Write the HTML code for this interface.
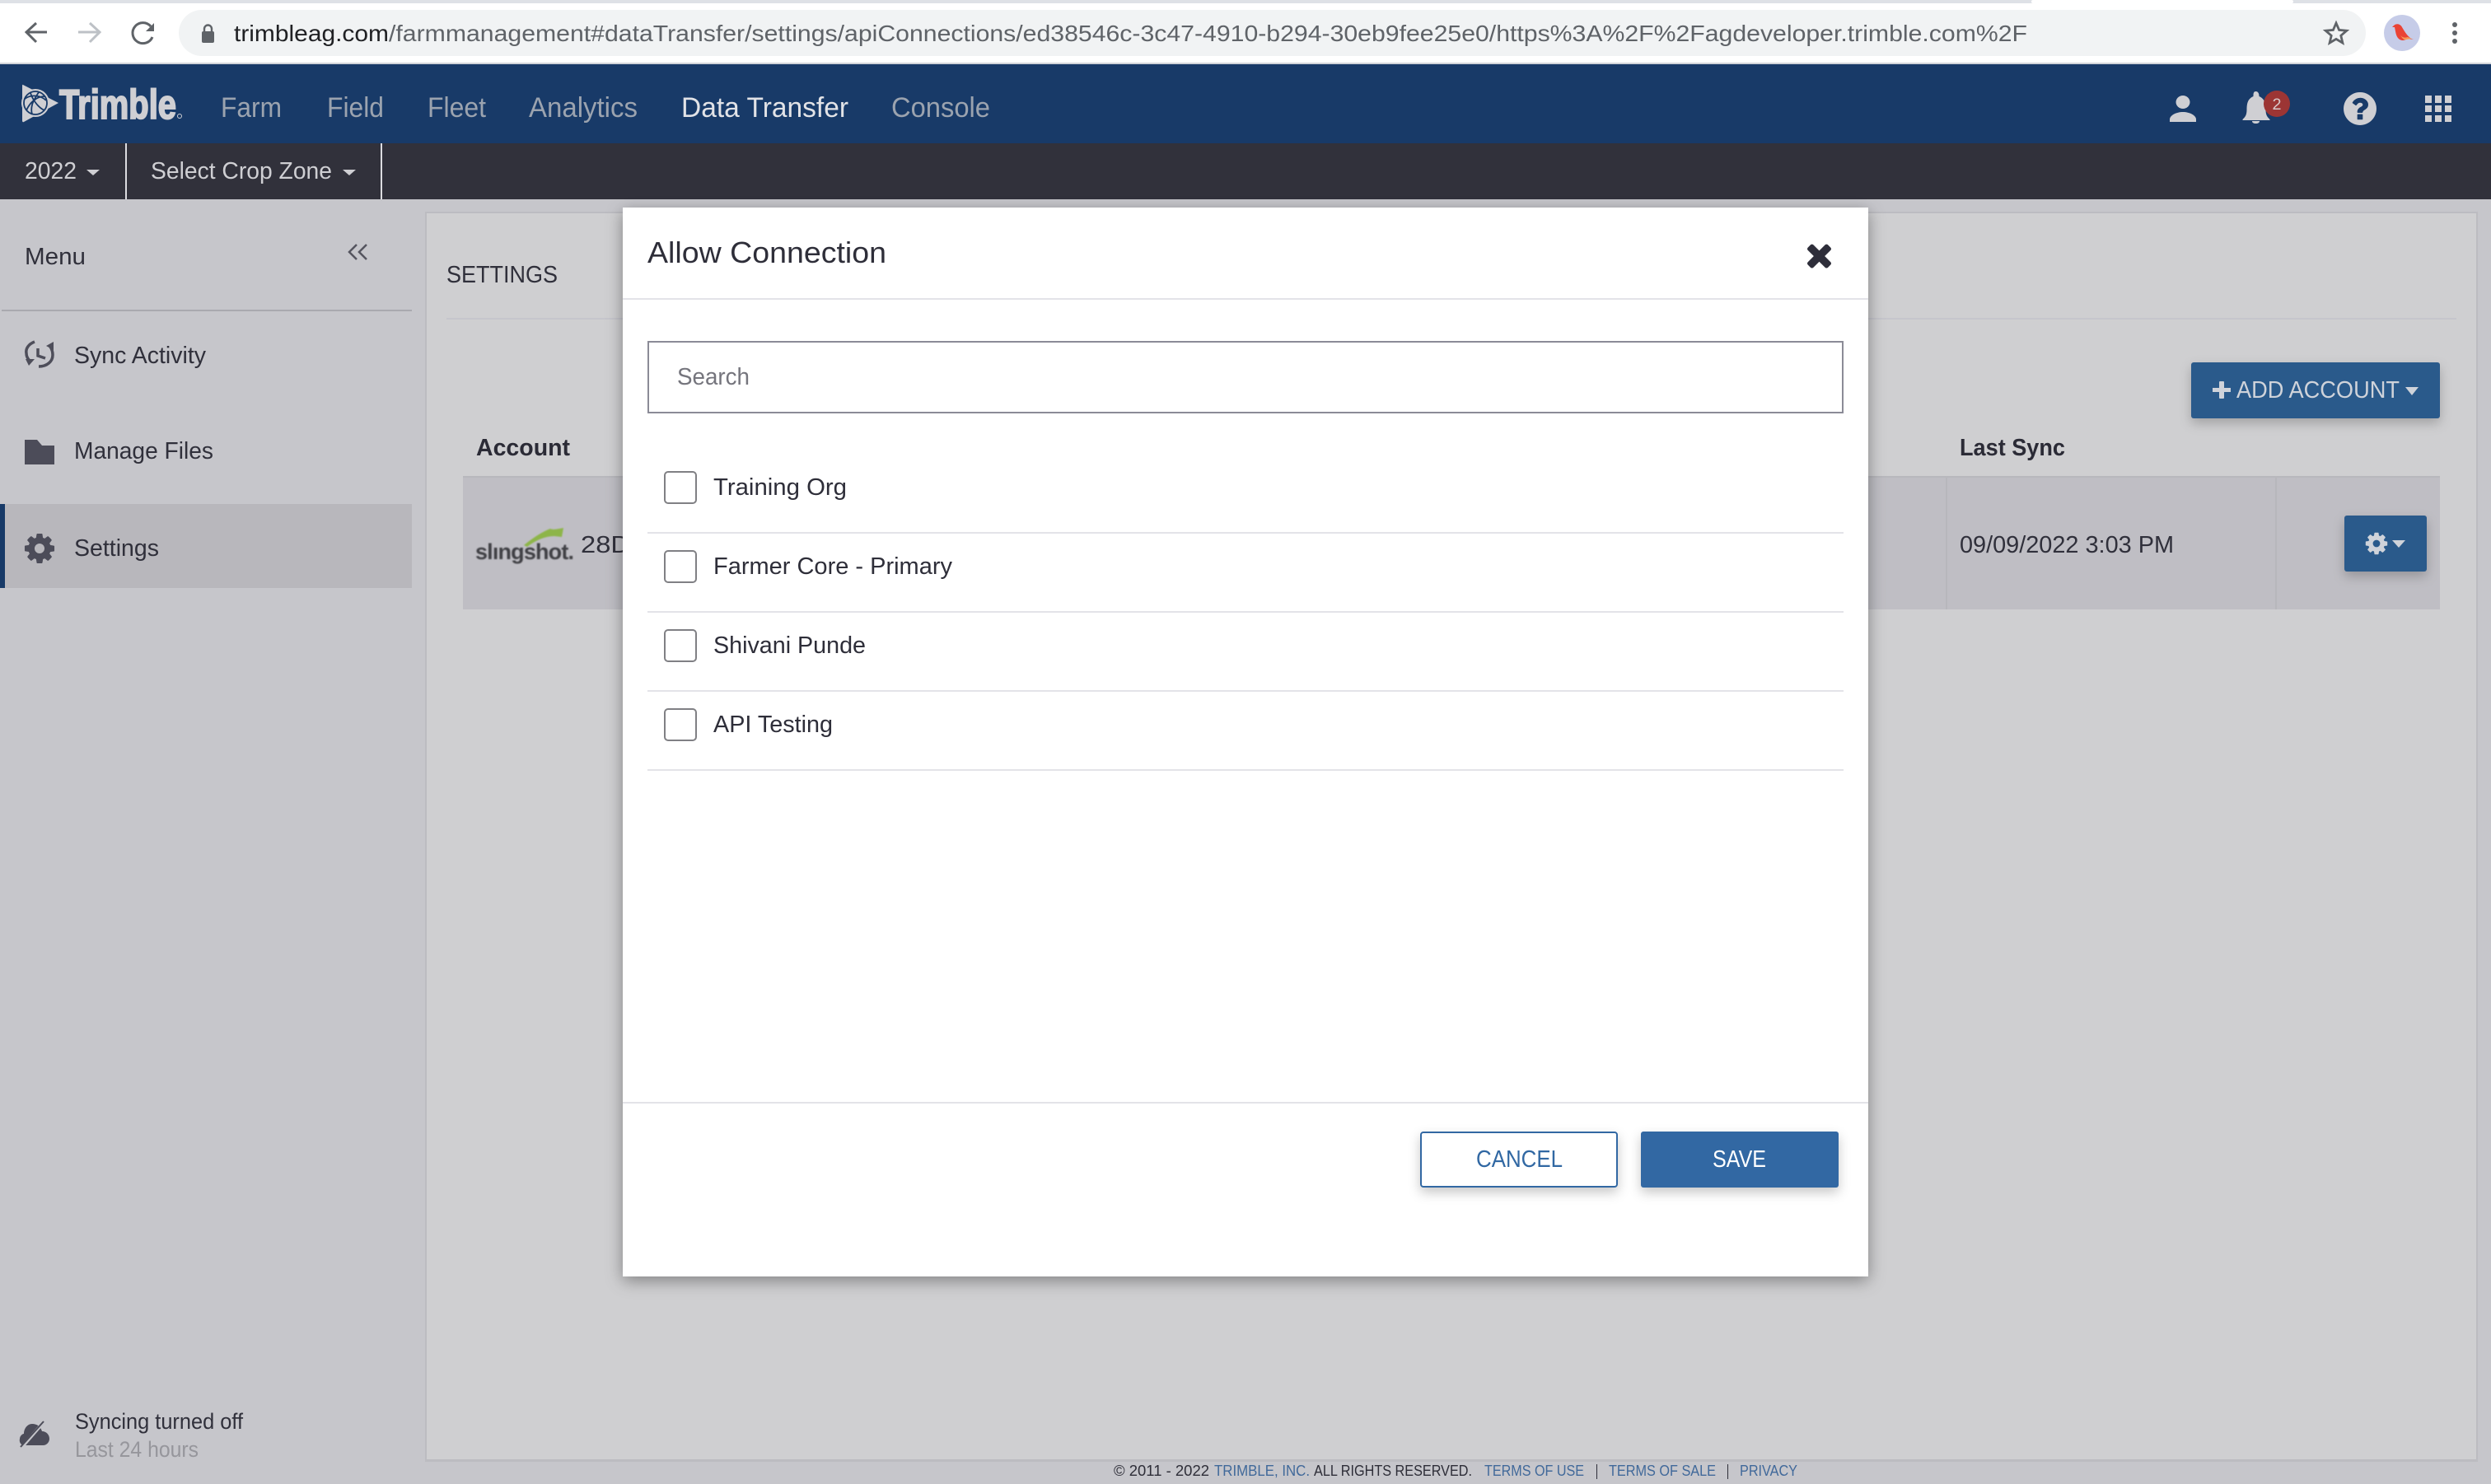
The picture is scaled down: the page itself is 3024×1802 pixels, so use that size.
<!DOCTYPE html>
<html lang="en">
<head>
<meta charset="utf-8">
<title>Allow Connection</title>
<style>
html,body{margin:0;padding:0;width:3024px;height:1802px;overflow:hidden;background:#c6c6cb}
svg{display:block;position:absolute;left:0;top:0}
text{font-family:"Liberation Sans",sans-serif;white-space:pre}
.t28{font-size:29px;fill:#30303b}
.nav{font-size:34px;fill:#9ba3af}
.sub{font-size:29px;fill:#cfcfd3}
.th{font-size:29px;font-weight:bold;fill:#2b2b36}
.lbl{font-size:29px;fill:#2e2e39}
.ft{font-size:18.500px;fill:#2e2e38}
.lk{font-size:18.500px;fill:#41699a}
</style>
</head>
<body>
<svg xmlns="http://www.w3.org/2000/svg" width="3024" height="1802" viewBox="0 0 3024 1802">
<defs>
<filter id="modalShadow" x="-10%" y="-10%" width="120%" height="120%"><feDropShadow dx="0" dy="5" stdDeviation="10" flood-color="#000" flood-opacity=".38"/></filter>
<filter id="btnShadow" x="-20%" y="-30%" width="140%" height="170%"><feDropShadow dx="0" dy="6" stdDeviation="7" flood-color="#000" flood-opacity=".22"/></filter>
<filter id="soft" x="-5%" y="-20%" width="110%" height="140%"><feGaussianBlur stdDeviation=".8"/></filter>
<path id="cog" d="M1152 896q0-106-75-181t-181-75-181 75-75 181 75 181 181 75 181-75 75-181zm512-109v222q0 12-8 23t-20 13l-185 28q-19 54-39 91 35 50 107 138 10 12 10 25t-9 23q-27 37-99 108t-94 71q-12 0-26-9l-138-108q-44 23-91 38-16 136-29 186-7 28-36 28h-222q-14 0-24.5-8.5t-11.5-21.5l-28-184q-49-16-90-37l-141 107q-10 9-25 9-14 0-25-11-126-114-165-168-7-10-7-23 0-12 8-23 15-21 51-66.5t54-70.5q-27-50-41-99l-183-27q-13-2-21-12.5t-8-23.5v-222q0-12 8-23t19-13l186-28q14-46 39-92-40-57-107-138-10-12-10-24 0-10 9-23 26-36 98.5-107.5t94.5-71.5q13 0 26 10l138 107q44-23 91-38 16-136 29-186 7-28 36-28h222q14 0 24.5 8.5t11.5 21.5l28 184q49 16 90 37l142-107q9-9 24-9 13 0 25 10 129 119 165 170 7 8 7 22 0 12-8 23-15 21-51 66.5t-54 70.5q26 50 41 98l183 28q13 2 21 12.5t8 23.5z"/>
</defs>

<!-- browser chrome -->
<rect x="0" y="0" width="3024" height="78" fill="#fff"/>
<rect x="0" y="0" width="3024" height="4" fill="#dee1e6"/>
<rect x="2466" y="0" width="318" height="4" rx="2" fill="#fff"/>
<rect x="0" y="76" width="3024" height="2" fill="#d2d5da"/>
<rect x="217" y="12" width="2655" height="56" rx="28" fill="#f1f3f4"/>
<path d="M57 39H33M44 28L32 39L44 51" fill="none" stroke="#5f6368" stroke-width="3"/>
<path d="M95 39H120M109 28L121 39L109 51" fill="none" stroke="#bdc1c6" stroke-width="3"/>
<path d="M183 32A12.5 12.5 0 1 0 185 45" fill="none" stroke="#5f6368" stroke-width="3"/>
<path d="M187 28V38H177Z" fill="#5f6368"/>
<path d="M248 38v-3a4.5 4.5 0 0 1 9 0v3" fill="none" stroke="#5f6368" stroke-width="2.4"/>
<rect x="245" y="38" width="15" height="14" rx="2" fill="#5f6368"/>
<text x="284" y="50" font-size="28" fill="#202124" textLength="188" lengthAdjust="spacingAndGlyphs">trimbleag.com</text>
<text x="472" y="50" font-size="28" fill="#5f6368" textLength="1989" lengthAdjust="spacingAndGlyphs">/farmmanagement#dataTransfer/settings/apiConnections/ed38546c-3c47-4910-b294-30eb9fee25e0/https%3A%2F%2Fagdeveloper.trimble.com%2F</text>
<path d="M2836 28l3.6 8.4 9.2.8-7 6 2.1 8.9-7.9-4.7-7.9 4.7 2.1-8.9-7-6 9.2-.8z" fill="none" stroke="#5f6368" stroke-width="2.8" stroke-linejoin="miter"/>
<circle cx="2916" cy="40" r="22" fill="#c6cce8"/>
<path d="M2906 31c3-3 8-2 10 2 3 5 5 9 11 14l3 1-8-1c-1 1-3 2-6 2-5-1-7-5-8-11l-1-5-3 0z" fill="#ea4335"/>
<path d="M2914 43c3 3 6 3 9 2l5 2-7 1c-3 1-5-2-7-5z" fill="#f59a57"/>
<circle cx="2980" cy="30" r="3" fill="#5f6368"/>
<circle cx="2980" cy="40" r="3" fill="#5f6368"/>
<circle cx="2980" cy="50" r="3" fill="#5f6368"/>

<!-- top nav -->
<rect x="0" y="78" width="3024" height="96" fill="#183a68"/>
<path d="M28 103L71 125L29 148Q27 149 27 146V105Q27 102 28 103Z" fill="#cfcfd3"/>
<circle cx="43" cy="125" r="17" fill="#cfcfd3"/>
<g fill="none" stroke="#183a68" stroke-width="1.800">
<circle cx="43" cy="125" r="14"/>
<path d="M30 120C38 114 50 116 56 122M32 134C36 125 44 117 54 117M37 113C40 122 47 131 54 134M39 139C36 128 42 120 47 112"/>
</g>
<text x="72" y="144" font-size="50" font-weight="bold" fill="#cfcfd3" stroke="#cfcfd3" stroke-width="2" textLength="142" lengthAdjust="spacingAndGlyphs">Trimble</text>
<circle cx="218" cy="141" r="2.5" fill="none" stroke="#cfcfd3" stroke-width="1"/>
<text class="nav" x="268" y="142" textLength="74" lengthAdjust="spacingAndGlyphs">Farm</text>
<text class="nav" x="397" y="142" textLength="69" lengthAdjust="spacingAndGlyphs">Field</text>
<text class="nav" x="519" y="142" textLength="71" lengthAdjust="spacingAndGlyphs">Fleet</text>
<text class="nav" x="642" y="142" textLength="132" lengthAdjust="spacingAndGlyphs">Analytics</text>
<text class="nav" x="827" y="142" textLength="203" lengthAdjust="spacingAndGlyphs" style="fill:#e2e3e7">Data Transfer</text>
<text class="nav" x="1082" y="142" textLength="120" lengthAdjust="spacingAndGlyphs">Console</text>
<g fill="#cfcfd3">
<ellipse cx="2650" cy="124" rx="8.5" ry="8"/>
<path d="M2634 148v-3c0-5 8-9 16-9s16 4 16 9v3z"/>
<path d="M2738.5 111c3 0 4 3 4 6c7 3 8 9 8 16c0 7 2 9 5 12v1h-33v-1c3-3 5-5 5-12c0-7 1-13 8-16c0-3 0-6 3-6z"/>
<path d="M2734 147h9c0 2-2 3-4.500 3s-4.500-1-4.500-3z"/>
<g transform="translate(2865 132) scale(.026) translate(-896 -896)"><path d="M1024 1376v-192q0-14-9-23t-23-9h-192q-14 0-23 9t-9 23v192q0 14 9 23t23 9h192q14 0 23-9t9-23zm256-672q0-88-55.500-163t-138.500-116-170-41q-243 0-371 213-15 24 8 42l132 100q7 6 19 6 16 0 25-12 53-68 86-92 34-24 86-24 48 0 85.500 26t37.500 59q0 38-20 61t-68 45q-63 28-115.500 86.500t-52.500 125.500v36q0 14 9 23t23 9h192q14 0 23-9t9-23q0-19 21.500-49.500t54.500-49.500q32-18 49-28.500t46-35 44.500-48 28-60.500 12.500-81zm384 192q0 209-103 385.500t-279.500 279.500-385.500 103-385.500-103-279.500-279.500-103-385.500 103-385.500 279.500-279.500 385.500-103 385.500 103 279.500 279.500 103 385.500z"/></g>
<rect x="2944" y="116" width="8" height="9"/><rect x="2956" y="116" width="8" height="9"/><rect x="2968" y="116" width="8" height="9"/>
<rect x="2944" y="128" width="8" height="8"/><rect x="2956" y="128" width="8" height="8"/><rect x="2968" y="128" width="8" height="8"/>
<rect x="2944" y="140" width="8" height="8"/><rect x="2956" y="140" width="8" height="8"/><rect x="2968" y="140" width="8" height="8"/>
</g>
<ellipse cx="2764" cy="126" rx="16" ry="16" fill="#9c3534"/>
<text x="2758.500" y="133" font-size="19" fill="#d9c9cb" textLength="11" lengthAdjust="spacingAndGlyphs">2</text>

<!-- sub bar -->
<rect x="0" y="174" width="3024" height="68" fill="#31313b"/>
<text class="sub" x="30" y="217" textLength="63" lengthAdjust="spacingAndGlyphs">2022</text>
<path d="M105 206H121L113 213Z" fill="#cfcfd3"/>
<rect x="152" y="174" width="2" height="68" fill="#dcdce0"/>
<text class="sub" x="183" y="217" textLength="220" lengthAdjust="spacingAndGlyphs">Select Crop Zone</text>
<path d="M416 206H432L424 213Z" fill="#cfcfd3"/>
<rect x="462" y="174" width="2" height="68" fill="#dcdce0"/>

<!-- sidebar -->
<rect x="0" y="242" width="3024" height="1560" fill="#c6c6cb"/>
<text class="t28" x="30" y="321" textLength="74" lengthAdjust="spacingAndGlyphs">Menu</text>
<path d="M433 297L424 306L433 315M445 297L436 306L445 315" fill="none" stroke="#55555f" stroke-width="2.500"/>
<rect x="2" y="376" width="498" height="2" fill="#a9a9af"/>

<g fill="none" stroke="#4e4e5a" stroke-width="3.500">
<path d="M42 415C34 418 31 424 32 429C32 432 33 435 36 438"/>
<path d="M47 445C57 445 64 439 64 431C64 427 63 424 61 421"/>
<path d="M46 423V432L55 435"/>
</g>
<path d="M31 436L42 436L35 444Z" fill="#4e4e5a"/>
<path d="M56 420L65 415L65 425Z" fill="#4e4e5a"/>
<text class="t28" x="90" y="441" textLength="160" lengthAdjust="spacingAndGlyphs">Sync Activity</text>

<path d="M30 534H45L51 541H66V564H30Z" fill="#4c4c59"/>
<text class="t28" x="90" y="557" textLength="169" lengthAdjust="spacingAndGlyphs">Manage Files</text>

<rect x="6" y="612" width="494" height="102" fill="#b8b7bc"/>
<rect x="0" y="612" width="6" height="102" fill="#183a68"/>
<g transform="translate(48 666) scale(.0235) translate(-896 -896)" fill="#4c4c59"><use href="#cog"/></g>
<text class="t28" x="90" y="675" textLength="103" lengthAdjust="spacingAndGlyphs">Settings</text>

<path d="M30 1755c-5 0-7-4-6-8 0-3 3-6 5-6 0-6 4-12 10-12 6 0 10 3 12 9 5 0 9 4 9 9 0 4-3 8-8 8z" fill="#4c4c59"/>
<path d="M26 1758L52 1728" stroke="#c6c6cb" stroke-width="4"/>
<path d="M25 1757L53 1726" stroke="#4c4c59" stroke-width="2"/>
<text x="91" y="1735" font-size="27" fill="#30303b" textLength="204" lengthAdjust="spacingAndGlyphs">Syncing turned off</text>
<text x="91" y="1769" font-size="27" fill="#96969c" textLength="150" lengthAdjust="spacingAndGlyphs">Last 24 hours</text>

<!-- content panel -->
<rect x="517" y="258" width="2490" height="1515" fill="#cfcfd1" stroke="#bcbcc1" stroke-width="2"/>
<text class="t28" x="542" y="343" textLength="135" lengthAdjust="spacingAndGlyphs">SETTINGS</text>
<rect x="542" y="386" width="2440" height="2" fill="#c6c6cc"/>

<rect x="2660" y="440" width="302" height="68" rx="3" fill="#2c5a8b" filter="url(#btnShadow)"/>
<path d="M2695 463h4a1 1 0 0 1 1 1v7h8v5h-8v7a1 1 0 0 1-1 1h-4a1 1 0 0 1-1-1v-7h-8v-5h8v-7a1 1 0 0 1 1-1z" fill="#cfd3da"/>
<text x="2715" y="483" font-size="29" fill="#cfd3da" textLength="198" lengthAdjust="spacingAndGlyphs">ADD ACCOUNT</text>
<path d="M2920 470H2936L2928 480Z" fill="#cfd3da"/>

<text class="th" x="578" y="553" textLength="114" lengthAdjust="spacingAndGlyphs">Account</text>
<text class="th" x="2379" y="553" textLength="128" lengthAdjust="spacingAndGlyphs">Last Sync</text>

<rect x="562" y="578" width="2400" height="162" fill="#bfbec4"/>
<rect x="562" y="578" width="2400" height="2" fill="#b8b8bd"/>
<rect x="2362" y="580" width="2" height="160" fill="#b7b7bc"/>
<rect x="2762" y="580" width="2" height="160" fill="#b7b7bc"/>
<path d="M636 662C648 652 660 645 668 642C672 644 678 642 684 641L682 652L673 651C662 651 650 656 640 664Z" fill="#8db548" filter="url(#soft)"/>
<text x="577" y="679" font-size="27" font-weight="bold" fill="#3f3f44" textLength="120" lengthAdjust="spacing" filter="url(#soft)">slıngshot.</text>
<text class="t28" x="705" y="671" textLength="60" lengthAdjust="spacingAndGlyphs">28D</text>
<text class="t28" x="2379" y="671" textLength="260" lengthAdjust="spacingAndGlyphs">09/09/2022 3:03 PM</text>
<rect x="2846" y="626" width="100" height="68" rx="3" fill="#2c5a8b" filter="url(#btnShadow)"/>
<g transform="translate(2885 660) scale(.0172) translate(-896 -896)" fill="#cfd3da"><use href="#cog"/></g>
<path d="M2904 656H2920L2912 665Z" fill="#cfd3da"/>

<!-- footer -->
<rect x="516" y="1773" width="2492" height="2" fill="#bcbcc1"/>
<text class="ft" x="1352" y="1792" textLength="116" lengthAdjust="spacingAndGlyphs">© 2011 - 2022</text>
<text class="lk" x="1474" y="1792" textLength="116" lengthAdjust="spacingAndGlyphs">TRIMBLE, INC.</text>
<text class="ft" x="1595" y="1792" textLength="192" lengthAdjust="spacingAndGlyphs">ALL RIGHTS RESERVED.</text>
<text class="lk" x="1802" y="1792" textLength="121" lengthAdjust="spacingAndGlyphs">TERMS OF USE</text>
<rect x="1938" y="1778" width="1" height="18" fill="#2e2e38"/>
<text class="lk" x="1953" y="1792" textLength="130" lengthAdjust="spacingAndGlyphs">TERMS OF SALE</text>
<rect x="2097" y="1778" width="1" height="18" fill="#2e2e38"/>
<text class="lk" x="2112" y="1792" textLength="70" lengthAdjust="spacingAndGlyphs">PRIVACY</text>

<!-- modal -->
<rect x="756" y="252" width="1512" height="1298" fill="#fff" filter="url(#modalShadow)"/>
<text x="786" y="319" font-size="36" fill="#2e2e39" textLength="290" lengthAdjust="spacingAndGlyphs">Allow Connection</text>
<g transform="translate(2208.500 309.500) scale(.0244) translate(-896 -896)" fill="#2e2e3a"><path d="M1490 1322q0 40-28 68l-136 136q-28 28-68 28t-68-28l-294-294-294 294q-28 28-68 28t-68-28l-136-136q-28-28-28-68t28-68l294-294-294-294q-28-28-28-68t28-68l136-136q28-28 68-28t68 28l294 294 294-294q28-28 68-28t68 28l136 136q28 28 28 68t-28 68l-294 294 294 294q28 28 28 68z"/></g>
<rect x="756" y="362" width="1512" height="2" fill="#e3e3e8"/>
<rect x="787" y="415" width="1450" height="86" fill="#fff" stroke="#8b8b97" stroke-width="2"/>
<text x="822" y="467" font-size="29" fill="#75757d" textLength="88" lengthAdjust="spacingAndGlyphs">Search</text>

<g fill="#fff" stroke="#808084" stroke-width="2">
<rect x="807" y="573" width="38" height="38" rx="4"/>
<rect x="807" y="669" width="38" height="38" rx="4"/>
<rect x="807" y="765" width="38" height="38" rx="4"/>
<rect x="807" y="861" width="38" height="38" rx="4"/>
</g>
<text class="lbl" x="866" y="601" textLength="162" lengthAdjust="spacingAndGlyphs">Training Org</text>
<text class="lbl" x="866" y="697" textLength="290" lengthAdjust="spacingAndGlyphs">Farmer Core - Primary</text>
<text class="lbl" x="866" y="793" textLength="185" lengthAdjust="spacingAndGlyphs">Shivani Punde</text>
<text class="lbl" x="866" y="889" textLength="145" lengthAdjust="spacingAndGlyphs">API Testing</text>
<g fill="#e3e3e8">
<rect x="786" y="646" width="1452" height="2"/>
<rect x="786" y="742" width="1452" height="2"/>
<rect x="786" y="838" width="1452" height="2"/>
<rect x="786" y="934" width="1452" height="2"/>
</g>
<rect x="756" y="1338" width="1512" height="2" fill="#e3e3e8"/>
<rect x="1725" y="1375" width="238" height="66" rx="3" fill="#fff" stroke="#3168a3" stroke-width="2" filter="url(#btnShadow)"/>
<text x="1792" y="1417" font-size="29" fill="#3168a3" textLength="105" lengthAdjust="spacingAndGlyphs">CANCEL</text>
<rect x="1992" y="1374" width="240" height="68" rx="3" fill="#3168a3" filter="url(#btnShadow)"/>
<text x="2079" y="1417" font-size="29" fill="#fff" textLength="65" lengthAdjust="spacingAndGlyphs">SAVE</text>
</svg>
</body>
</html>
